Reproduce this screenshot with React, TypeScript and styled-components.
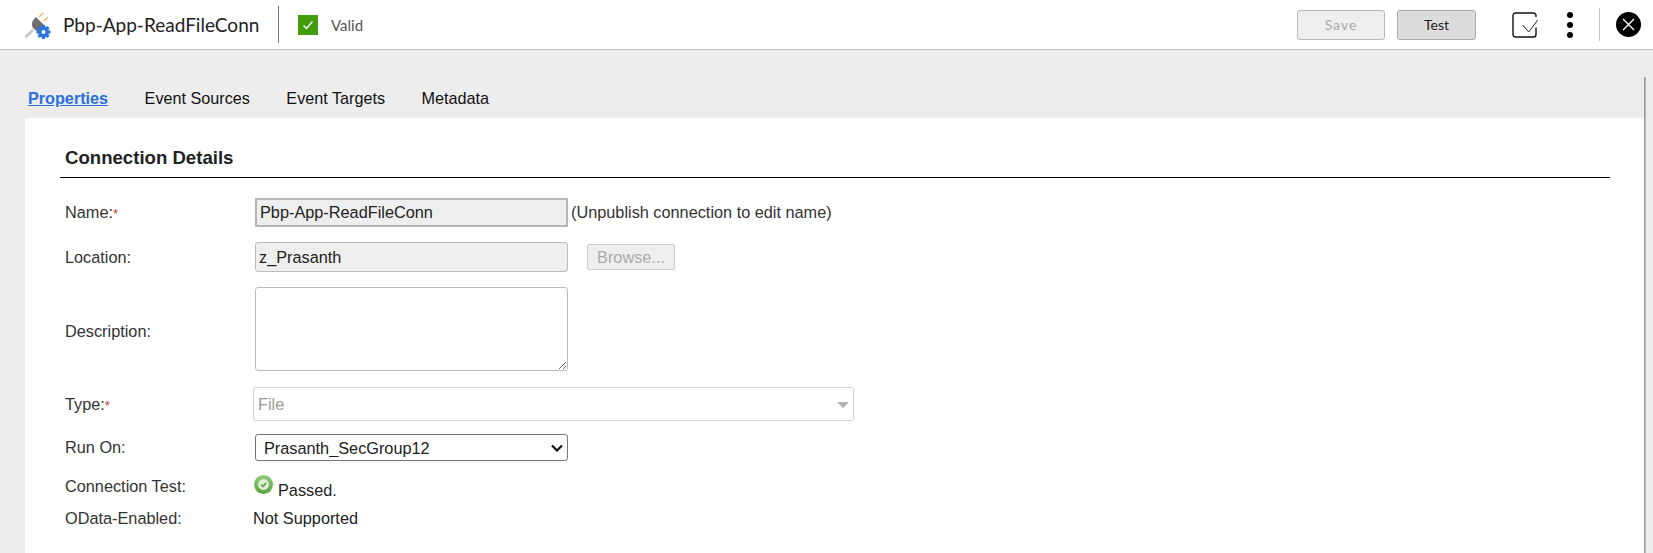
import React from "react"
import styled, { createGlobalStyle } from "styled-components"

const GlobalStyle = createGlobalStyle`
  html, body {
    margin: 0;
    height: 100%;
    overflow: hidden;
    background: #ededed;
    font-family: "Liberation Sans", Arial, sans-serif;
  }
`

const PlugIcon = () => (
  <svg width="27" height="27" viewBox="0 0 27 27">
    <path d="M14 5l4-4M19 9l4-4" stroke="#e8b34a" strokeWidth="1.4" />
    <path d="M0.5 25L8 18" stroke="#c4c4c4" strokeWidth="2.5" />
    <path d="M11 5l11 11-2 1a8 8 0 0 1-10 1l-2-2a8 8 0 0 1 1-9z" fill="#6f6f6f" />
    <g transform="translate(18.5 20)">
      <g fill="#2b74e0">
        <rect x="-1.6" y="-7" width="3.2" height="14" />
        <rect x="-1.6" y="-7" width="3.2" height="14" transform="rotate(45)" />
        <rect x="-1.6" y="-7" width="3.2" height="14" transform="rotate(90)" />
        <rect x="-1.6" y="-7" width="3.2" height="14" transform="rotate(135)" />
        <circle r="5.2" />
      </g>
      <circle r="2" fill="#fff" />
    </g>
  </svg>
)

const ValidIcon = () => (
  <svg width="20" height="20" viewBox="0 0 20 20">
    <rect width="20" height="20" fill="#429d0d" />
    <path d="M5.5 10.5l3 3 6-7" fill="none" stroke="#fff" strokeWidth="1.5" />
  </svg>
)

const ChecklistIcon = () => (
  <svg width="27" height="26" viewBox="0 0 27 26">
    <path
      d="M24 4.5V3.5A2.5 2.5 0 0 0 21.5 1H3.5A2.5 2.5 0 0 0 1 3.5V22.5A2.5 2.5 0 0 0 3.5 25H21.5A2.5 2.5 0 0 0 24 22.5V16"
      fill="none"
      stroke="#111"
      strokeWidth="1.4"
      strokeLinecap="round"
    />
    <path d="M10.7 13l6 7 9-12" fill="none" stroke="#222" strokeWidth="1" />
  </svg>
)

const KebabIcon = () => (
  <svg width="8" height="26" viewBox="0 0 8 26">
    <circle cx="4" cy="3" r="3" fill="#000" />
    <circle cx="4" cy="13" r="3" fill="#000" />
    <circle cx="4" cy="23" r="3" fill="#000" />
  </svg>
)

const CloseIcon = () => (
  <svg width="25" height="25" viewBox="0 0 25 25">
    <circle cx="12.5" cy="12.5" r="12.5" fill="#000" />
    <path d="M7 7l11 11M18 7L7 18" stroke="#fff" strokeWidth="1.4" />
  </svg>
)

const PassedIcon = () => (
  <svg width="19" height="19" viewBox="0 0 19 19">
    <defs>
      <linearGradient id="passed" x1="0" y1="0" x2="0" y2="1">
        <stop offset="0" stopColor="#93cc7e" />
        <stop offset="1" stopColor="#5aa53e" />
      </linearGradient>
    </defs>
    <circle cx="9.5" cy="9.5" r="9.5" fill="url(#passed)" />
    <circle cx="9.5" cy="9.5" r="5.4" fill="#dff0d6" />
    <path d="M7 9.5l2 2 3.2-3.6" fill="none" stroke="#5aa53e" strokeWidth="1.6" />
  </svg>
)

const ChevronIcon = () => (
  <svg width="12" height="8" viewBox="0 0 12 8">
    <path d="M1 1.5l5 5 5-5" fill="none" stroke="#111" strokeWidth="2.2" />
  </svg>
)

const App = () => (
  <Page>
    <GlobalStyle />
    <Header>
      <IconSlot><PlugIcon /></IconSlot>
      <Title>Pbp-App-ReadFileConn</Title>
      <HeaderDivider />
      <ValidIcon />
      <ValidText>Valid</ValidText>
      <HeaderActions>
        <ActionButton disabled $width={88}>Save</ActionButton>
        <ActionButton $width={79}>Test</ActionButton>
        <ChecklistSlot><ChecklistIcon /></ChecklistSlot>
        <KebabSlot><KebabIcon /></KebabSlot>
        <ActionDivider />
        <CloseSlot><CloseIcon /></CloseSlot>
      </HeaderActions>
    </Header>
    <Body>
      <Tabs>
        <Tab $active>Properties</Tab>
        <Tab>Event Sources</Tab>
        <Tab>Event Targets</Tab>
        <Tab>Metadata</Tab>
      </Tabs>
      <Card>
        <SectionTitle>Connection Details</SectionTitle>
        <Form>
          <Row $height={29} $gap={15}>
            <Label>Name:<Required>*</Required></Label>
            <NameInput value="Pbp-App-ReadFileConn" readOnly />
            <Hint>(Unpublish connection to edit name)</Hint>
          </Row>
          <Row $height={30} $gap={15}>
            <Label>Location:</Label>
            <LocationInput value="z_Prasanth" readOnly />
            <BrowseButton disabled>Browse...</BrowseButton>
          </Row>
          <Row $height={84} $gap={16}>
            <DescriptionLabel>Description:</DescriptionLabel>
            <Description />
          </Row>
          <Row $height={34} $gap={13}>
            <Label>Type:<Required>*</Required></Label>
            <TypeSelect>
              File
              <TypeArrow />
            </TypeSelect>
          </Row>
          <Row $height={27} $gap={14}>
            <Label>Run On:</Label>
            <RunOnField>
              <RunOnSelect defaultValue="Prasanth_SecGroup12">
                <option>Prasanth_SecGroup12</option>
              </RunOnSelect>
              <RunOnChevron><ChevronIcon /></RunOnChevron>
            </RunOnField>
          </Row>
          <Row $height={22} $gap={11}>
            <Label>Connection Test:</Label>
            <PassedValue>
              <PassedIcon />
              <span>Passed.</span>
            </PassedValue>
          </Row>
          <Row $height={20} $gap={0}>
            <Label>OData-Enabled:</Label>
            <PlainValue>Not Supported</PlainValue>
          </Row>
        </Form>
      </Card>
      <ScrollEdge />
    </Body>
  </Page>
)

const Page = styled.div`
  width: 1653px;
  height: 553px;
  display: flex;
  flex-direction: column;
  overflow: hidden;
  color: #222;
`

const Header = styled.header`
  flex: none;
  height: 49px;
  display: flex;
  align-items: center;
  background: #fff;
  border-bottom: 1px solid #c4c4c4;
  padding-left: 25px;
`

const IconSlot = styled.div`
  width: 38px;
  height: 27px;
  margin-top: 1px;
`

const Title = styled.div`
  width: 215px;
  font-family: Lato, sans-serif;
  font-size: 19px;
  color: #222;
`

const HeaderDivider = styled.div`
  width: 1px;
  height: 37px;
  margin-right: 19px;
  background: #777;
`

const ValidText = styled.div`
  margin-left: 13px;
  font-family: Lato, sans-serif;
  font-size: 15px;
  color: #555;
`

const HeaderActions = styled.div`
  margin-left: auto;
  display: flex;
  align-items: center;
`

const ActionButton = styled.button<{ $width: number }>`
  width: ${(p) => p.$width}px;
  height: 30px;
  margin-right: 12px;
  padding: 0;
  border: 1px solid #aaa;
  border-radius: 3px;
  background: #dcdcdc;
  font-family: Lato, sans-serif;
  font-size: 14px;
  color: #222;

  &:disabled {
    border-color: #b8b8b8;
    background: #eee;
    color: #aaa;
    letter-spacing: 1px;
  }
`

const ChecklistSlot = styled.div`
  display: flex;
  margin-left: 24px;
  margin-right: 27px;
`

const KebabSlot = styled.div`
  display: flex;
  margin-right: 25px;
`

const ActionDivider = styled.div`
  width: 1px;
  height: 33px;
  margin-right: 16px;
  background: #c4c4c4;
`

const CloseSlot = styled.div`
  display: flex;
  margin-right: 12px;
`

const Body = styled.main`
  position: relative;
  flex: 1;
  min-height: 0;
  display: flex;
  flex-direction: column;
`

const ScrollEdge = styled.div`
  position: absolute;
  top: 27px;
  bottom: 0;
  right: 7px;
  width: 2px;
  background: linear-gradient(to right, #8c8c8c, #c8c8c8);
`

const Tabs = styled.nav`
  flex: none;
  height: 68px;
  box-sizing: border-box;
  padding: 38px 0 0 28px;
  display: flex;
  gap: 36.5px;
`

const Tab = styled.a<{ $active?: boolean }>`
  font-size: 16.2px;
  line-height: 20px;
  color: ${(p) => (p.$active ? "#2a6fdc" : "#111")};
  font-weight: ${(p) => (p.$active ? 700 : 400)};
  text-decoration: ${(p) => (p.$active ? "underline" : "none")};
`

const Card = styled.section`
  flex: 1;
  margin: 0 8px 0 25px;
  padding: 0 0 0 35px;
  background: #fff;
`

const SectionTitle = styled.h2`
  width: 1550px;
  height: 60px;
  box-sizing: border-box;
  margin: 0;
  padding: 28px 0 0 5px;
  border-bottom: 1px solid #000;
  font-size: 18.6px;
  line-height: 24px;
  color: #222;
`

const Form = styled.div`
  padding: 20px 0 0 5px;
  font-size: 16.3px;
  display: flex;
  flex-direction: column;
`

const Row = styled.div<{ $height: number; $gap: number }>`
  min-height: ${(p) => p.$height}px;
  margin-bottom: ${(p) => p.$gap}px;
  display: flex;
  align-items: center;
`

const Label = styled.label`
  flex: none;
  width: 190px;
  color: #333;
`

const DescriptionLabel = styled(Label)`
  padding-top: 4px;
`

const Required = styled.span`
  color: #c0392b;
  font-size: 13px;
`

const TextBox = styled.input`
  width: 313px;
  box-sizing: border-box;
  font-family: inherit;
  font-size: 16.3px;
  color: #222;
  background: #eee;
  outline: none;
`

const NameInput = styled(TextBox)`
  height: 29px;
  padding: 0 0 0 3px;
  border: 2px solid #b5b5b5;
`

const Hint = styled.span`
  margin-left: 3px;
  color: #333;
`

const LocationInput = styled(TextBox)`
  height: 30px;
  padding: 0 0 0 3px;
  border: 1px solid #bbb;
  border-radius: 3px;
`

const BrowseButton = styled.button`
  width: 88px;
  height: 26px;
  margin-left: 19px;
  padding: 0;
  border: 1px solid #ccc;
  border-radius: 2px;
  background: #eee;
  font-family: inherit;
  font-size: 16.3px;
  color: #aaa;
`

const Description = styled.textarea`
  width: 313px;
  height: 84px;
  box-sizing: border-box;
  border: 1px solid #bbb;
  border-radius: 3px;
  background: #fff;
  outline: none;
`

const TypeSelect = styled.div`
  position: relative;
  width: 601px;
  height: 34px;
  margin-left: -2px;
  box-sizing: border-box;
  padding-left: 4px;
  display: flex;
  align-items: center;
  border: 1px solid #d2d2d2;
  border-radius: 3px;
  color: #999;
`

const TypeArrow = styled.span`
  position: absolute;
  right: 4px;
  top: 14px;
  border-top: 6px solid #b0b0b0;
  border-left: 6px solid transparent;
  border-right: 6px solid transparent;
`

const RunOnField = styled.div`
  position: relative;
  display: flex;
`

const RunOnSelect = styled.select`
  appearance: none;
  width: 313px;
  height: 27px;
  box-sizing: border-box;
  padding-left: 8px;
  border: 1px solid #767676;
  border-radius: 3px;
  background: #fff;
  font-family: inherit;
  font-size: 16.3px;
  color: #222;
`

const RunOnChevron = styled.span`
  position: absolute;
  right: 5px;
  top: 10px;
  display: flex;
  pointer-events: none;
`

const PassedValue = styled.div`
  margin-left: -1px;
  display: flex;
  align-items: flex-start;
  gap: 5px;
  height: 22px;

  span {
    margin-top: 6px;
  }
`

const PlainValue = styled.div`
  margin-left: -2px;
  color: #222;
`

export default App
